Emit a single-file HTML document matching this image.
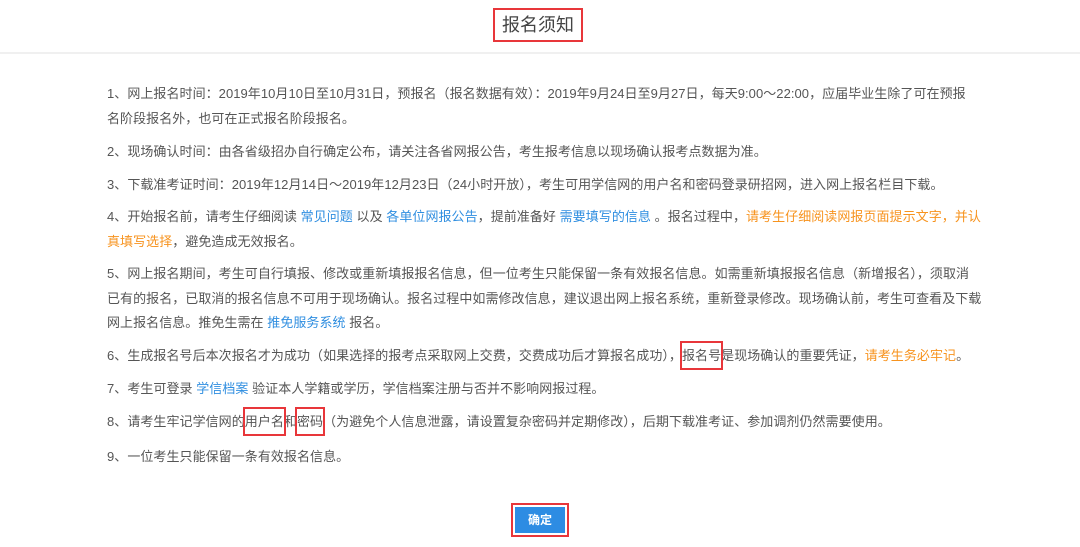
<!DOCTYPE html>
<html><head><meta charset="utf-8"><style>
html,body{margin:0;padding:0;background:#fff;width:1080px;height:547px;overflow:hidden}
body{font-family:"Liberation Sans","Noto Sans CJK SC",sans-serif;color:#555;font-size:13px}
.hd{position:absolute;left:0;top:0;width:1080px;height:52px;border-bottom:2px solid #f0f0f0}
.title{position:absolute;left:493px;top:8px;width:86px;height:30px;border:2px solid #e8363a;font-size:18px;color:#444;text-align:center;line-height:30px}
.l{position:absolute;left:107px;white-space:nowrap;line-height:16px;letter-spacing:0.05px}
.b{color:#2f8ee0}.o{color:#f7931e}
.bx{position:relative}
.bx:after{content:"";position:absolute;left:-2px;right:-2px;top:-7px;bottom:-7px;border:2px solid #e8363a}
.btn{position:absolute;left:511px;top:503px;width:54px;height:30px;border:2px solid #e8363a;background:#fff}
.btn div{margin:2px;height:26px;background:#2d8ce3;color:#fff;font-size:12px;text-align:center;line-height:26px;font-weight:bold}
</style></head><body>
<div class="hd"></div>
<div class="title">报名须知</div>
<div class="l" style="top:86px">1、网上报名时间：2019年10月10日至10月31日，预报名（报名数据有效）：2019年9月24日至9月27日，每天9:00～22:00，应届毕业生除了可在预报</div>
<div class="l" style="top:111px">名阶段报名外，也可在正式报名阶段报名。</div>
<div class="l" style="top:144px">2、现场确认时间：由各省级招办自行确定公布，请关注各省网报公告，考生报考信息以现场确认报考点数据为准。</div>
<div class="l" style="top:177px">3、下载准考证时间：2019年12月14日～2019年12月23日（24小时开放），考生可用学信网的用户名和密码登录研招网，进入网上报名栏目下载。</div>
<div class="l" style="top:209px">4、开始报名前，请考生仔细阅读 <span class="b">常见问题</span> 以及 <span class="b">各单位网报公告</span>，提前准备好 <span class="b">需要填写的信息</span> 。报名过程中，<span class="o">请考生仔细阅读网报页面提示文字，并认</span></div>
<div class="l" style="top:234px"><span class="o">真填写选择</span>，避免造成无效报名。</div>
<div class="l" style="top:266px">5、网上报名期间，考生可自行填报、修改或重新填报报名信息，但一位考生只能保留一条有效报名信息。如需重新填报报名信息（新增报名），须取消</div>
<div class="l" style="top:291px">已有的报名，已取消的报名信息不可用于现场确认。报名过程中如需修改信息，建议退出网上报名系统，重新登录修改。现场确认前，考生可查看及下载</div>
<div class="l" style="top:315px">网上报名信息。推免生需在 <span class="b">推免服务系统</span> 报名。</div>
<div class="l" style="top:348px">6、生成报名号后本次报名才为成功（如果选择的报考点采取网上交费，交费成功后才算报名成功），<span class="bx">报名号</span>是现场确认的重要凭证，<span class="o">请考生务必牢记</span>。</div>
<div class="l" style="top:381px">7、考生可登录 <span class="b">学信档案</span> 验证本人学籍或学历，学信档案注册与否并不影响网报过程。</div>
<div class="l" style="top:414px">8、请考生牢记学信网的<span class="bx">用户名</span>和<span class="bx">密码</span>（为避免个人信息泄露，请设置复杂密码并定期修改），后期下载准考证、参加调剂仍然需要使用。</div>
<div class="l" style="top:449px">9、一位考生只能保留一条有效报名信息。</div>
<div class="btn"><div>确定</div></div>
</body></html>
